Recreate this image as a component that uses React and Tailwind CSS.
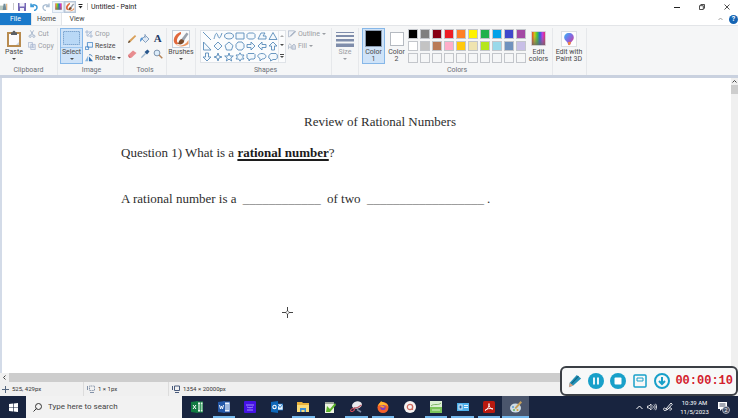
import React from 'react';

const row1 = ['bg-[#000000]', 'bg-[#7f7f7f]', 'bg-[#880015]', 'bg-[#ed1c24]', 'bg-[#ff7f27]', 'bg-[#fff200]', 'bg-[#22b14c]', 'bg-[#00a2e8]', 'bg-[#3f48cc]', 'bg-[#a349a4]'];
const row2 = ['bg-[#ffffff]', 'bg-[#c3c3c3]', 'bg-[#b97a57]', 'bg-[#ffaec9]', 'bg-[#ffc90e]', 'bg-[#efe4b0]', 'bg-[#b5e61d]', 'bg-[#99d9ea]', 'bg-[#7092be]', 'bg-[#c8bfe7]'];
const row3 = Array(10).fill('bg-[#f5f6f7]');
const swatches = [...row1, ...row2, ...row3];

// outlines on a 10x10 grid, in gallery order
const shapes = [
  'M1 1L9 9',
  'M1 8C3 0 4 2 5 5S7 8 9 2',
  'M5 2C11 2 11 8 5 8S-1 2 5 2Z',
  'M1 2H9V8H1Z',
  'M2.5 2H7.5L9 3.5V6.5L7.5 8H2.5L1 6.5V3.5Z',
  'M1 8L4 2H8L6 5H9V8Z',
  'M5 1.5L9 8.5H1Z',
  'M1.5 1V9H9Z',
  'M5 1L9 5L5 9L1 5Z',
  'M5 1L9 4.5L7.5 9H2.5L1 4.5Z',
  'M3 1H7L9 3.5V6.5L7 9H3L1 6.5V3.5Z',
  'M1 3.5H5V1L9 5L5 9V6.5H1Z',
  'M9 3.5H5V1L1 5L5 9V6.5H9Z',
  'M3.5 9V5H1L5 1L9 5H6.5V9Z',
  'M3.5 1V5H1L5 9L9 5H6.5V1Z',
  'M5 1L6 4L9 5L6 6L5 9L4 6L1 5L4 4Z',
  'M5 1L6 4H9.3L6.8 6L7.7 9L5 7.2L2.3 9L3.2 6L.7 4H4Z',
  'M5 .8L6.3 3H9L7.6 5L9 7H6.3L5 9.2L3.7 7H1L2.4 5L1 3H3.7Z',
  'M2 1.5H8L9 2.5V6L8 7H4.5L3 9V7H2L1 6V2.5Z',
  'M5 1.5C10 1.5 10.5 7 5 7L3 9V6.5C-1 4.5 1 1.5 5 1.5Z',
  'M3 1.5H8L9.3 3V6L8 7.5H5L2.5 9V7.3L.8 6V3.5Z',
];

const Caret = ({ className = '' }) => (
  <svg viewBox="0 0 4 2" className={`h-[2px] w-[4px] shrink-0 ${className}`} fill="currentColor"><path d="M0 0H4L2 2Z" /></svg>
);

const Group = ({ label, className, children }) => (
  <section aria-label={label} className={`flex shrink-0 flex-col border-r border-[#e6e8eb] ${className}`}>
    <div className="flex h-[38px] items-start">{children}</div>
    <div className="h-[9px] text-center leading-[9px] text-[#6b6f76]">{label}</div>
  </section>
);

const BigButton = ({ icon, lines, caret, className = '' }) => (
  <button className={`flex h-[36px] shrink-0 flex-col items-center leading-[7px] ${className}`}>
    <span className="flex h-[21px] shrink-0 items-center justify-center">{icon}</span>
    {lines.map(l => <span key={l} className="whitespace-nowrap">{l}</span>)}
    {caret && <Caret className="mt-[2px]" />}
  </button>
);

const SmallButton = ({ icon, text, caret, className = '' }) => (
  <button className={`flex h-[12px] items-center gap-[2px] whitespace-nowrap ${className}`}>
    <svg viewBox="0 0 10 10" className="h-[8px] w-[8px] shrink-0" fill="none">{icon}</svg>
    {text}
    {caret && <Caret />}
  </button>
);

const Tool = ({ label, children }) => (
  <button aria-label={label} className="flex h-[15px] items-center justify-center">
    <svg viewBox="0 0 10 10" className="h-[10px] w-[10px]">{children}</svg>
  </button>
);

const PaletteIcon = ({ className }) => (
  <svg viewBox="0 0 16 16" className={className}>
    <defs>
      <linearGradient id="hue">
        <stop offset="0" stopColor="#e8452c" /><stop offset=".2" stopColor="#c9c61b" /><stop offset=".4" stopColor="#3fc93a" />
        <stop offset=".6" stopColor="#2563e0" /><stop offset=".8" stopColor="#c13be0" /><stop offset="1" stopColor="#e02f6c" />
      </linearGradient>
      <linearGradient id="shade" x2="0" y2="1"><stop offset=".3" stopColor="#777" stopOpacity="0" /><stop offset="1" stopColor="#666" stopOpacity=".8" /></linearGradient>
    </defs>
    <rect width="16" height="16" fill="#d8d8dc" />
    <rect x="1" y="1" width="14" height="14" fill="url(#hue)" />
    <rect x="1" y="1" width="14" height="14" fill="url(#shade)" />
  </svg>
);

const BrushIcon = ({ className }) => (
  <svg viewBox="0 0 18 18" className={className}>
    <rect x=".5" y=".5" width="17" height="17" fill="#fafbfc" stroke="#c6cfda" />
    <path d="M9 2C4 3 1 8 2 12C3 15 6 15 7 13C4 13 4 8 9 4Z" fill="#e0683c" />
    <path d="M3 14C7 17 13 16 16.500 10L16.500 14C13 17 6 17.500 3 14Z" fill="#ec9560" />
    <path d="M6 14C7 10 9 8 12 9.500C13 13 9.500 15.500 6 14Z" fill="#7c4a2a" />
    <path d="M9.500 9L14.500 2.500L16.500 4L12 10.500Z" fill="#9aa2ad" />
  </svg>
);

const TitleBar = () => (
  <header className="flex h-[13px] shrink-0 items-center bg-white text-[#222]">
    <div className="flex items-center gap-[2px]">
      <svg viewBox="0 0 10 10" className="h-[9px] w-[9px]"><path d="M0 4H5V9H0Z" fill="#b9c9c0" /><path d="M3 9L4 2L6 2L7 9Z" fill="#6f8b98" /><path d="M7 2H8V9H7Z" fill="#d89c5a" /></svg>
      <span className="ml-[2px] h-[7px] w-px bg-[#c9c9c9]" />
      <button aria-label="Save" className="ml-[2px]"><svg viewBox="0 0 8 8" className="h-[8px] w-[8px]"><path d="M0 0H8V8H0Z" fill="#7567b5" /><path d="M1.5 0H6.5V3.5H1.5ZM2 5H6V8H2Z" fill="#f2f1fa" /></svg></button>
      <button aria-label="Undo" className="ml-[2px]"><svg viewBox="0 0 8 8" className="h-[8px] w-[8px]" fill="none" stroke="#3d9ad8" strokeWidth="1.5"><path d="M1 .5V3.5H4M1.2 3.2C3 1 7 1.5 7 4.5C7 6.5 5 7.4 4 7.4" /></svg></button>
      <button aria-label="Redo" className="ml-[2px]"><svg viewBox="0 0 8 8" className="h-[8px] w-[8px]" fill="none" stroke="#adc0d4" strokeWidth="1.4"><path d="M7 .5V3.5H4M6.8 3.2C5 1 1 1.5 1 4.5C1 6.5 3 7.4 4 7.4" /></svg></button>
      <button aria-label="Edit colors" className="flex h-[12px] w-[12px] items-center justify-center border border-[#cfdcec] bg-[#eef4fb]"><PaletteIcon className="h-[7px] w-[7px]" /></button>
      <button aria-label="Brushes" className="-ml-[2px] flex h-[12px] w-[12px] items-center justify-center border border-[#b9c8da] bg-[#eef4fb]"><BrushIcon className="h-[10px] w-[10px]" /></button>
      <button aria-label="Customize"><svg viewBox="0 0 5 5" className="h-[5px] w-[5px]" fill="#222"><path d="M.5 0H4.5V1H.5ZM.5 2H4.5L2.5 4.5Z" /></svg></button>
      <span className="ml-[2px] h-[7px] w-px bg-[#c9c9c9]" />
    </div>
    <h1 className="ml-[3px] text-[7px] leading-[12px]">Untitled - Paint</h1>
    <div className="ml-auto flex items-center gap-[19px] pr-[8px]">
      <button aria-label="Minimize"><svg viewBox="0 0 6 6" className="h-[6px] w-[6px]"><path d="M0 3.5H6" stroke="#222" /></svg></button>
      <button aria-label="Restore"><svg viewBox="0 0 6 6" className="h-[6px] w-[6px]" fill="none" stroke="#222" strokeWidth=".8"><path d="M.5 1.7H4.3V5.5H.5ZM1.8 1.5V.5H5.5V4.3H4.5" /></svg></button>
      <button aria-label="Close"><svg viewBox="0 0 6 6" className="h-[6px] w-[6px]"><path d="M.5 .5L5.5 5.5M5.5 .5L.5 5.5" stroke="#222" strokeWidth=".8" /></svg></button>
    </div>
  </header>
);

const Tabs = () => (
  <nav className="flex h-[12px] shrink-0 items-stretch bg-white text-[7px] leading-[12px] text-[#444]">
    <button className="w-[31px] bg-[#1979ca] text-white">File</button>
    <button className="w-[31px] border-x border-[#e3e5e8] bg-[#f8f9fa]">Home</button>
    <button className="w-[30px]">View</button>
    <div className="ml-auto flex items-center gap-[6px]">
      <button aria-label="Collapse ribbon"><svg viewBox="0 0 5 4" className="h-[4px] w-[5px]"><path d="M.5 3L2.5 1L4.5 3" fill="none" stroke="#888" strokeWidth=".8" /></svg></button>
      <button aria-label="Help" className="h-[9px] w-[9px] rounded-full bg-[#1464b4] text-[7px] leading-[9px] font-bold text-white">?</button>
    </div>
  </nav>
);

const Ribbon = () => (
  <div className="flex h-[50px] shrink-0 overflow-hidden border-t border-[#e3e5e8] bg-[#f5f6f7] pt-[2px] text-[7px] text-[#4a4a4a]">
    <Group label="Clipboard" className="w-[58px]">
      <BigButton className="w-[28px]" lines={['Paste']} caret icon={
        <svg viewBox="0 0 14 17" className="h-[17px] w-[14px]"><path d="M0 2H14V17H0Z" fill="#b88b4f" /><path d="M2 4H12V15H2Z" fill="#fbfbfd" /><path d="M4 2.5H5.5C5.5 0 8.5 0 8.5 2.5H10V5H4Z" fill="#5b6068" /><path d="M9 15L12 12V15Z" fill="#c9d3de" /></svg>
      } />
      <div className="text-[#9a9da3]">
        <SmallButton text="Cut" icon={<g stroke="#9fb0c8" strokeWidth="1.1"><path d="M3 .5L6.5 6.5M7 .5L3.5 6.5" /><circle cx="2.7" cy="7.8" r="1.4" /><circle cx="7.3" cy="7.8" r="1.4" /></g>} />
        <SmallButton text="Copy" icon={<g stroke="#a9b8d0" fill="#eef1f7"><path d="M.5 .5H5.5V6.5H.5ZM3.5 3H9V9.5H3.5Z" /><path d="M5 5H8M5 7H8" /></g>} />
      </div>
    </Group>

    <Group label="Image" className="w-[66px] pl-[2px]">
      <button className="flex h-[36px] w-[23px] shrink-0 flex-col items-center border border-[#86b7e8] bg-[#cfe3f8] leading-[7px]">
        <span className="flex h-[19px] w-full items-center justify-center border-b border-[#9cc5ee]">
          <svg viewBox="0 0 17 14" className="h-[14px] w-[17px]"><rect x=".5" y=".5" width="16" height="13" fill="#b9d8f6" stroke="#7ea6d0" strokeDasharray="1.5 .5" /></svg>
        </span>
        <span className="mt-px">Select</span>
        <Caret className="mt-[2px]" />
      </button>
      <div className="ml-[2px]">
        <SmallButton text="Crop" className="text-[#9a9da3]" icon={<g stroke="#9fb4d0"><path d="M2.5 0V7.5H10M0 2.5H7.5V10M3 7L9 1" /></g>} />
        <SmallButton text="Resize" icon={<g stroke="#3f82c4"><path d="M3 .5H9.5V6.5H3ZM.5 6H4.5V9.5H.5Z" fill="#eaf3fc" /></g>} />
        <SmallButton text="Rotate" caret icon={<g><path d="M0 9H4V2Z" fill="#86b5df" /><path d="M5 9H10L5 3Z" fill="#2a6db1" /><path d="M5 1C7 .5 8.5 1.5 9 3" stroke="#2a6db1" /></g>} />
      </div>
    </Group>

    <Group label="Tools" className="w-[43px] px-[2px]">
      <div className="grid w-full grid-cols-3 pt-[3px]">
        <Tool label="Pencil"><path d="M1 9L2 6.5L8 1L9.2 2.2L3.5 8Z" fill="#d9a05a" /><path d="M1 9L2 6.5L3.5 8Z" fill="#4d4036" /></Tool>
        <Tool label="Fill with color"><path d="M2 5L5.5 1.5L9 5L5.5 8.5Z" fill="#dfe9f4" stroke="#6f8eb2" strokeWidth=".8" /><path d="M0 8C0 4 1 3 3 3.5L1.5 6.5Z" fill="#4f92d6" /><path d="M5 0V4" stroke="#6f8eb2" strokeWidth=".8" /></Tool>
        <button aria-label="Text" className="font-['Liberation_Serif',serif] text-[11px] leading-[15px] font-bold text-[#1f3b66]">A</button>
        <Tool label="Eraser"><path d="M1 6L6 1.5L9.5 4L4.5 8.8L2 8.5Z" fill="#e88d90" /><path d="M1 6L4 8.8L2 8.5Z" fill="#c9585f" /></Tool>
        <Tool label="Color picker"><path d="M1 9.2L1.5 7.5L5 4L6 5L2.5 8.5Z" fill="#9db5cc" /><path d="M4.5 3L7.5 .5L9.5 2.5L7 5.5Z" fill="#27568c" /></Tool>
        <Tool label="Magnifier"><circle cx="4" cy="4" r="2.9" fill="#dcecfa" stroke="#7d94ae" /><path d="M6 6L9.3 9.3" stroke="#b5855a" strokeWidth="1.5" /></Tool>
      </div>
    </Group>

    <Group label="" className="w-[29px]">
      <BigButton className="w-[28px]" lines={['Brushes']} caret icon={<BrushIcon className="h-[18px] w-[18px]" />} />
    </Group>

    <Group label="Shapes" className="w-[136px] pl-[4px]">
      <div className="mt-[2px] flex h-[33px] w-[86px] shrink-0 border border-[#dfe3e8] bg-[#fbfcfd]">
        <div className="grid flex-1 grid-cols-7 grid-rows-3 place-items-center">
          {shapes.map((d, i) => (
            <svg key={i} viewBox="0 0 10 10" className="h-[10px] w-[10px]"><path d={d} fill="#f4f9fd" stroke="#5a8cba" strokeWidth=".9" /></svg>
          ))}
        </div>
        <div className="flex w-[7px] flex-col items-center justify-around border-l border-[#e6e9ed]">
          <Caret className="rotate-180 text-[#aaa]" />
          <Caret />
          <svg viewBox="0 0 4 4" className="h-[4px] w-[4px]"><path d="M0 0H4V1H0ZM0 2H4L2 4Z" fill="#4a4a4a" /></svg>
        </div>
      </div>
      <div className="ml-[2px] text-[#9a9da3]">
        <SmallButton text="Outline" caret icon={<g stroke="#a9b5c6"><path d="M.5 1H8V2L2 8.5H.5Z" fill="#eef1f6" /><path d="M3 8L9.5 1.5" strokeWidth="1.5" /></g>} />
        <SmallButton text="Fill" caret icon={<g stroke="#a9b5c6"><path d="M.5 9V4L2.5 2L4 4V9M.8 6.5H4" /><path d="M5 5L7.5 2.5L9.5 5V9H5Z" fill="#d5dce7" /></g>} />
      </div>
    </Group>

    <Group label="" className="w-[27px]">
      <BigButton className="w-[26px] text-[#9a9da3]" lines={['Size']} caret icon={
        <svg viewBox="0 0 18 16" className="h-[16px] w-[18px]" fill="#7f8dab"><path d="M0 1H18V2H0ZM0 4H18V6H0ZM0 8H18V10.5H0ZM0 12.5H18V16H0Z" /></svg>
      } />
    </Group>

    <Group label="Colors" className="w-[194px] pl-[3px]">
      <BigButton className="w-[23px] bg-[#cfe3f8] outline outline-[#86b7e8] -outline-offset-1" lines={['Color', '1']} icon={<span className="h-[17px] w-[17px] border border-[#8a9bb0] bg-black" />} />
      <BigButton className="w-[23px]" lines={['Color', '2']} icon={<span className="h-[14px] w-[14px] border border-[#b5bac1] bg-white" />} />
      <div className="mt-px grid w-[118px] shrink-0 grid-cols-10 gap-[2px]">
        {swatches.map((c, i) => (
          <button key={i} aria-label={`Color ${i + 1}`} className={`h-[10px] w-[10px] border border-[#c3c6cb] ${c}`} />
        ))}
      </div>
      <BigButton className="w-[25px]" lines={['Edit', 'colors']} icon={<PaletteIcon className="h-[15px] w-[15px]" />} />
    </Group>

    <Group label="" className="w-[34px]">
      <BigButton className="w-[32px]" lines={['Edit with', 'Paint 3D']} icon={
        <svg viewBox="0 0 16 16" className="h-[16px] w-[16px]">
          <defs><linearGradient id="drop" x1="0" x2="1" y2="1"><stop offset="0" stopColor="#35b6f2" /><stop offset=".45" stopColor="#7c6ee6" /><stop offset="1" stopColor="#e8347c" /></linearGradient></defs>
          <rect x=".5" y=".5" width="15" height="15" fill="#fdfdfe" stroke="#dcdfe3" />
          <path d="M8 2C11 2 13 4 12.800 7C12.500 9.500 10 10.500 9.500 13C9 14.500 7 14.500 7 13C6.500 10.500 3.500 9.500 3.200 7C3 4 5 2 8 2Z" fill="url(#drop)" />
          <path d="M7 11H10L9 14H7.500Z" fill="#f58a3c" />
        </svg>
      } />
    </Group>
  </div>
);

const Canvas = () => (
  <div className="flex flex-1 border-t-3 border-[#c9d1df] bg-white">
    <main className="relative flex-1 border-l-2 border-[#d3dbe8] px-[119px] pt-[35px] font-['Liberation_Serif',serif] text-[13px] leading-[18px] text-[#2e2e2e]">
      <h2 className="pl-[183px]">Review of Rational Numbers</h2>
      <p className="mt-[13px]">Question 1) What is a <b className="text-[#1c1c1c] underline decoration-2 underline-offset-2">rational number</b>?</p>
      <p className="mt-[28px] whitespace-nowrap">A rational number is a <span className="px-[3px] text-[#777]">____________</span> of two <span className="px-[3px] text-[#777]">__________________</span>.</p>
      {/* drawing cursor */}
      <svg viewBox="0 0 11 11" className="absolute top-[229px] left-[280px] h-[11px] w-[11px]" fill="none" stroke="#444"><path d="M5.500 0V4M5.500 7V11M0 5.500H4M7 5.500H11" /><circle cx="5.500" cy="5.500" r="1.500" strokeWidth=".6" /></svg>
    </main>
    <div className="flex w-[7px] flex-col items-center bg-[#f0f0f0]">
      <svg viewBox="0 0 5 7" className="h-[7px] w-[5px]"><path d="M.5 4.500L2.500 2.500L4.500 4.500" fill="none" stroke="#444" /></svg>
      <div className="h-[9px] w-full bg-[#cdcdcd]" />
    </div>
  </div>
);

const StatusBar = () => (
  <div className="flex h-[14px] shrink-0 items-stretch bg-[#f0f0f0] text-[6px] leading-[14px] text-[#333]">
    <span className="flex w-[84px] items-center gap-[3px] border-r border-[#dcdcdc] pl-[2px]">
      <svg viewBox="0 0 7 7" className="h-[7px] w-[7px]"><path d="M3.500 0V7M0 3.500H7" stroke="#55677f" /></svg>525, 429px
    </span>
    <span className="flex w-[85px] items-center gap-[3px] border-r border-[#dcdcdc] pl-[3px]">
      <svg viewBox="0 0 8 8" className="h-[8px] w-[8px]" fill="none" stroke="#8392a8"><path d="M2.500 1H7.500V5.500H2.500Z" strokeDasharray="1 .6" /><path d="M.5 1V5M3 7.500H7" /></svg>1 × 1px
    </span>
    <span className="flex w-[85px] items-center gap-[3px] pl-[3px]">
      <svg viewBox="0 0 8 8" className="h-[8px] w-[8px]" fill="none" stroke="#47597a"><path d="M2.500 1H7.500V5.500H2.500Z" /><path d="M.5 1V5M3 7.500H7" /></svg>1354 × 20000px
    </span>
  </div>
);

const Recorder = () => (
  <div className="absolute right-0 bottom-[22px] flex h-[30px] items-center rounded-[6px] border-2 border-[#3b3f45] bg-[#f7f8f8] pr-[3px] pl-[6px]">
    <div className="flex items-center gap-[6px] text-[#18a0c9]">
      <button aria-label="Draw"><svg viewBox="0 0 16 16" className="h-[16px] w-[14px]"><path d="M1 15L2 10L10 1L15 5L6 13Z" fill="#2392b8" /><path d="M1 15L2 10L6 13Z" fill="#d8a184" /><path d="M4 11L12 2.500" stroke="#13627f" strokeWidth="1.200" /></svg></button>
      <button aria-label="Pause"><svg viewBox="0 0 16 16" className="h-[16px] w-[16px]"><circle cx="8" cy="8" r="8" fill="currentColor" /><path d="M6 4.500V11.500M10 4.500V11.500" stroke="#fff" strokeWidth="1.800" /></svg></button>
      <button aria-label="Stop"><svg viewBox="0 0 16 16" className="h-[16px] w-[16px]"><circle cx="8" cy="8" r="8" fill="currentColor" /><rect x="4.500" y="4.500" width="7" height="7" rx="1" fill="#fff" /></svg></button>
      <button aria-label="Webcam"><svg viewBox="0 0 16 16" className="h-[16px] w-[16px]" fill="none" stroke="currentColor" strokeWidth="1.500"><rect x="2" y="2" width="12" height="12" rx="1" /><path d="M5 5H11V8H5Z" strokeWidth="1" /></svg></button>
      <button aria-label="Save recording"><svg viewBox="0 0 16 16" className="h-[16px] w-[16px]" fill="none" stroke="currentColor"><circle cx="8" cy="8" r="7" strokeWidth="2" /><path d="M8 4V11M5 8L8 11L11 8" strokeWidth="2" /></svg></button>
    </div>
    <time className="ml-[5px] font-['Liberation_Mono',monospace] text-[12px] leading-[16px] font-bold text-[#d3202c]">00:00:10</time>
  </div>
);

const apps = [
  { name: 'Excel', icon: <><path d="M5 1H12V11H5Z" fill="#e9f3ec" stroke="#1f8a4c" /><path d="M7 4H12M7 6H12M7 8H12M9.500 1V11" stroke="#1f8a4c" strokeWidth=".8" /><path d="M0 1L7 0V12L0 11Z" fill="#117a41" /><path d="M2 4L5 8M5 4L2 8" stroke="#fff" /></> },
  { name: 'Word', open: true, icon: <><path d="M5 1H12V11H5Z" fill="#eef3fb" stroke="#2b5fb4" /><path d="M7 4H11M7 6H11M7 8H11" stroke="#2b5fb4" strokeWidth=".8" /><path d="M0 1L7 0V12L0 11Z" fill="#2458a8" /><path d="M1.500 4L2.500 8L3.500 5L4.500 8L5.500 4" fill="none" stroke="#fff" strokeWidth=".9" /></> },
  { name: 'Prime Video', icon: <><rect x="0" y="0" width="12" height="12" rx="1" fill="#4512e6" /><path d="M2 4H10M3 6C5 7 7 7 9 6M3 9H9" fill="none" stroke="#a99bff" strokeWidth=".9" /></> },
  { name: 'Outlook', icon: <><path d="M6 3H12V9H6Z" fill="#eaf4fc" stroke="#1b76c9" strokeWidth=".7" /><path d="M6 3L9 6.500L12 3" fill="none" stroke="#1b76c9" /><path d="M0 1L7 0V12L0 11Z" fill="#0f68b9" /><circle cx="3.500" cy="6" r="1.700" fill="none" stroke="#fff" strokeWidth="1.100" /></> },
  { name: 'File Explorer', open: true, icon: <><path d="M0 1H5L6 2H12V11H0Z" fill="#e8b13c" /><path d="M0 4H12V11H0Z" fill="#fbdc7a" /><path d="M3 11V7H9V11H7.500V9H4.500V11Z" fill="#3f8fd2" /></> },
  { name: 'Notepad++', icon: <><path d="M1 1H10V12H1Z" fill="#eef4e2" /><path d="M1 1H10V3H1Z" fill="#9aa59a" /><path d="M2 11L3 5L6 8L11 2L12 4L6 11Z" fill="#5db52c" /></> },
  { name: 'Snip & Sketch', open: true, icon: <><ellipse cx="7" cy="4" rx="5" ry="3.500" fill="#e8e9ee" transform="rotate(-15 7 4)" /><path d="M4 6.500C6 7.500 9 6 11.500 4" fill="none" stroke="#b95a68" strokeWidth="1.200" /><ellipse cx="2.500" cy="9" rx="2" ry="1.300" fill="none" stroke="#d94b5b" transform="rotate(-30 2.500 9)" /><path d="M7 8.500L11 11" stroke="#7f8ba5" strokeWidth="1.500" /></> },
  { name: 'Firefox', open: true, icon: <><circle cx="6" cy="6.500" r="5.500" fill="#f4602a" /><path d="M1 5C2 2 4 1 4 0C6 2 10 1 11.500 6C10 4 8 4 7 5L3 4Z" fill="#ffb62e" /><circle cx="6" cy="6.500" r="2.600" fill="#7d3fc0" /><path d="M3 5C5 4 7 5 8 6C7 7 5 7 4 6Z" fill="#ff9a2b" /></> },
  { name: 'Ask', icon: <><circle cx="6" cy="6" r="6" fill="#f7f3f2" /><circle cx="6" cy="6" r="2.700" fill="none" stroke="#cf6b5e" strokeWidth="1.200" /><path d="M8.500 5V9" stroke="#cf6b5e" strokeWidth="1.200" /></> },
  { name: 'Converter', open: true, icon: <><path d="M0 0H12V12H0Z" fill="#7cc45a" /><path d="M0 0H12V6H0Z" fill="#dcefd4" /><path d="M2 9H10" stroke="#d8f0cc" /><path d="M1 5C4 2 8 5 11 2" fill="none" stroke="#67a84d" strokeWidth=".8" /></> },
  { name: 'Cards', open: true, icon: <><path d="M0 2H12V10H0Z" fill="#4fb0ea" /><path d="M1.500 3.500H5.500V8.500H1.500Z" fill="#e3f2fc" /><path d="M2.500 4.500H4.500V7.500H2.500Z" fill="#1d5da0" /><path d="M7 4.500H11M7 6.500H11" stroke="#e8f5ff" /></> },
  { name: 'Acrobat', open: true, icon: <><rect width="12" height="12" rx="1.500" fill="#b81a10" /><path d="M2 9.500C5 8 6.500 5 6 2.500C5.500 5 7 8 10 8C7 7 4 7.500 2 9.500Z" fill="none" stroke="#fff" strokeWidth=".9" /></> },
  { name: 'Paint', open: true, active: true, icon: <><ellipse cx="5.500" cy="7" rx="5.500" ry="4.500" fill="#cfdde6" /><circle cx="3" cy="6" r="1" fill="#5c9bd1" /><circle cx="4" cy="9" r="1" fill="#6fb35c" /><circle cx="7.500" cy="9" r="1" fill="#d9a13c" /><path d="M4.500 7L10.500 0L12 1.500L6 8Z" fill="#c7a05a" /></> },
];

const Taskbar = () => (
  <footer className="flex h-[22px] shrink-0 items-stretch bg-[#18243f] text-white">
    <button aria-label="Start" className="flex w-[26px] shrink-0 items-center justify-center">
      <svg viewBox="0 0 10 10" className="h-[9px] w-[9px]" fill="#fff"><path d="M0 1.200L4.500 .6V4.700H0ZM5.200 .5L10 0V4.700H5.200ZM0 5.300H4.500V9.400L0 8.800ZM5.200 5.300H10V10L5.200 9.500Z" /></svg>
    </button>
    <label className="flex w-[156px] shrink-0 items-center gap-[6px] bg-[#f2f2f2] pl-[7px]">
      <svg viewBox="0 0 9 9" className="h-[9px] w-[9px] shrink-0" fill="none" stroke="#333"><circle cx="5.500" cy="3.500" r="3" /><path d="M3.500 5.500L.5 8.500" /></svg>
      <input type="text" aria-label="Search" placeholder="Type here to search" className="w-full min-w-0 bg-transparent text-[8px] leading-[12px] text-[#444] outline-none placeholder:text-[#444]" />
    </label>
    <div className="ml-[2px] grid w-[345px] shrink-0 grid-cols-13">
      {apps.map(a => (
        <button key={a.name} aria-label={a.name} className={`flex items-center justify-center border-b-2 ${a.active ? '' : 'mx-[2px]'} ${a.open ? 'border-[#76b9ed]' : 'border-transparent'} ${a.active ? 'bg-[#4a556c]' : ''}`}>
          <svg viewBox="0 0 12 12" className="mt-[2px] h-[12px] w-[12px]">{a.icon}</svg>
        </button>
      ))}
    </div>
    <div className="ml-auto flex items-center pr-[8px]">
      <button aria-label="Hidden icons"><svg viewBox="0 0 7 5" className="h-[5px] w-[7px]"><path d="M.5 4L3.500 1L6.500 4" fill="none" stroke="#fff" /></svg></button>
      <button aria-label="Volume" className="ml-[4px]"><svg viewBox="0 0 10 8" className="h-[8px] w-[10px]" fill="none" stroke="#fff" strokeWidth=".8"><path d="M.5 3H2L4 1V7L2 5H.5ZM5.500 2.500C6.500 3.500 6.500 4.500 5.500 5.500M7 1.500C8.500 3 8.500 5 7 6.500M8.500 .8C10 3 10 5 8.500 7.200" /></svg></button>
      <button aria-label="Pen" className="ml-[6px]"><svg viewBox="0 0 10 10" className="h-[10px] w-[10px]" fill="none" stroke="#fff" strokeWidth=".9"><path d="M3 7L8 1L9.300 2.300L4.500 7.500ZM3 7C0 4 0 9 2 8.500C5 8 6 5 8 6C9.500 7 8 8.500 6.500 8" /></svg></button>
      <time className="ml-[7px] w-[29px] text-center text-[6px] leading-[9px] whitespace-nowrap">10:39 AM<br />11/5/2023</time>
      <button aria-label="Notifications" className="ml-[8px]">
        <svg viewBox="0 0 13 13" className="h-[13px] w-[13px]"><path d="M1 1H10V8H5L3 10V8H1Z" fill="#fff" /><path d="M2.500 3H8.500M2.500 5H8.500" stroke="#18243f" strokeWidth=".8" /><circle cx="9" cy="9" r="3.500" fill="#3b465d" stroke="#dfe3ea" strokeWidth=".7" /><text x="9" y="11" fontSize="6" textAnchor="middle" fill="#fff">2</text></svg>
      </button>
    </div>
  </footer>
);

export default function App() {
  return (
    <div className="relative flex min-h-screen flex-col overflow-hidden bg-white font-['Roboto','Noto_Sans',sans-serif]">
      <TitleBar />
      <Tabs />
      <Ribbon />
      <Canvas />
      <div className="flex h-[9px] shrink-0 items-center bg-[#f0f0f0]">
        <svg viewBox="0 0 9 7" className="h-[7px] w-[9px]"><path d="M5.500 1.500L3.500 3.500L5.500 5.500" fill="none" stroke="#444" /></svg>
        <div className="mr-[14px] h-full flex-1 bg-[#cdcdcd]" />
      </div>
      <StatusBar />
      <Taskbar />
      <Recorder />
    </div>
  );
}
